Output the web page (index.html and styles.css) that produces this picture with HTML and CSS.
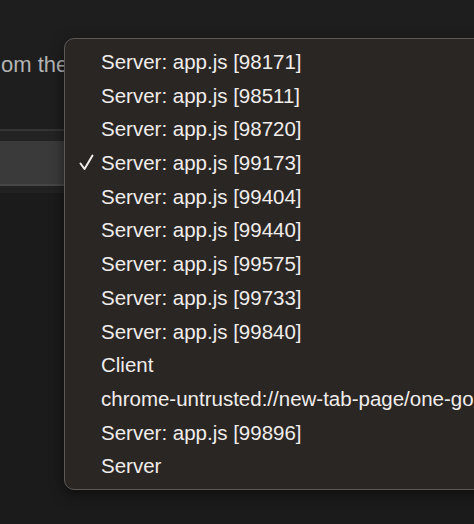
FILE: index.html
```html
<!DOCTYPE html>
<html lang="en">
<head>
    <meta charset="UTF-8">
    <meta name="viewport" content="width=device-width, initial-scale=1.0">
    <title>Process picker</title>
    <link rel="stylesheet" href="styles.css">
</head>
<body>
    <div class="page">
        <p class="hint">om the</p>
        <div class="field">
            <div class="field-box"></div>
        </div>
    </div>

    <ul class="menu">
        <li>Server: app.js [98171]</li>
        <li>Server: app.js [98511]</li>
        <li>Server: app.js [98720]</li>
        <li class="checked">
            <svg class="check" width="15" height="17" viewBox="0 0 15 17">
                <path d="M1.5 9.5 L5.5 15 L13.5 1.5" fill="none" stroke="#f0edeb" stroke-width="2" stroke-linecap="round" stroke-linejoin="round"/>
            </svg>
            Server: app.js [99173]
        </li>
        <li>Server: app.js [99404]</li>
        <li>Server: app.js [99440]</li>
        <li>Server: app.js [99575]</li>
        <li>Server: app.js [99733]</li>
        <li>Server: app.js [99840]</li>
        <li>Client</li>
        <li>chrome-untrusted://new-tab-page/one-google-bar</li>
        <li>Server: app.js [99896]</li>
        <li>Server</li>
    </ul>
</body>
</html>
```

FILE: styles.css
```css
html, body {
    margin: 0;
    height: 100%;
}
body {
    background-color: #1b1b1b;
    font-family: "Liberation Sans", Arial, sans-serif;
    overflow: hidden;
    position: relative;
}
.page {
    background-color: #1e1e1e;
}
.hint {
    margin: 0;
    padding: 52px 0 0 1px;
    height: 129px;
    box-sizing: border-box;
    font-size: 22px;
    color: #b4b4b4;
    white-space: nowrap;
}
.field {
    border-top: 2px solid #343434;
    background-color: #232323;
    padding-top: 10px;
    border-bottom: 7px solid #212121;
}
.field-box {
    height: 43px;
    background-color: #3a3a3a;
    border-bottom: 2px solid #464646;
}
.menu {
    position: absolute;
    left: 64px;
    top: 38px;
    right: -20px;
    margin: 0;
    padding: 6px 0 6px 0;
    list-style: none;
    background-color: #2a2624;
    border: 1px solid #5c5a59;
    border-radius: 10px;
    box-shadow: 0 4px 14px rgba(0, 0, 0, 0.5);
}
.menu li {
    height: 33.7px;
    line-height: 33.7px;
    padding-left: 36px;
    font-size: 20.5px;
    color: #f0edeb;
    white-space: nowrap;
    overflow: hidden;
    position: relative;
}
.check {
    position: absolute;
    left: 14px;
    top: 8px;
}
```
